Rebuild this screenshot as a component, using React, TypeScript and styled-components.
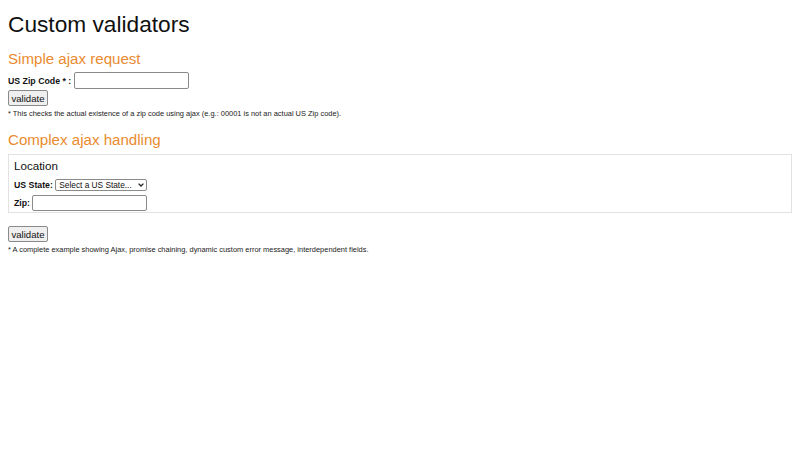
import React from "react";
import styled, { createGlobalStyle } from "styled-components";

const GlobalStyle = createGlobalStyle`
  html, body { background: #fff; }
  body {
    margin: 8px;
    font-family: "Liberation Sans", Arial, sans-serif;
    color: #111;
  }
`;

const Title = styled.h1`
  margin: 3px 0 13px;
  font-size: 22.7px;
  line-height: 26px;
  font-weight: normal;
  color: #111;
`;

const SectionTitle = styled.h2<{ $top?: number }>`
  margin: ${(p) => p.$top ?? 0}px 0 0;
  font-size: 15.1px;
  line-height: 18px;
  font-weight: normal;
  color: #e98b30;
`;

const Row = styled.div<{ $top?: number }>`
  display: flex;
  align-items: center;
  gap: 2.4px;
  margin-top: ${(p) => p.$top ?? 0}px;
`;

const Label = styled.label`
  font-size: 8.75px;
  font-weight: bold;
  color: #111;
  white-space: pre;
`;

const TextInput = styled.input<{ $w: number; $h: number }>`
  box-sizing: border-box;
  width: ${(p) => p.$w}px;
  height: ${(p) => p.$h}px;
  margin: 0;
  padding: 1px 2px;
  border: 1px solid #8a8a8a;
  border-radius: 2px;
  background: #fff;
  font: 9px "Liberation Sans", Arial, sans-serif;
`;

const SelectWrap = styled.span`
  position: relative;
  display: inline-flex;
`;

const Select = styled.select`
  box-sizing: border-box;
  width: 92px;
  height: 12px;
  margin: 0;
  padding: 0 0 0 3px;
  appearance: none;
  -webkit-appearance: none;
  border: 1px solid #8a8a8a;
  border-radius: 2px;
  background: #fff;
  color: #111;
  font: 8.3px "Liberation Sans", Arial, sans-serif;
  line-height: 10px;
`;

const Chevron = styled.svg`
  position: absolute;
  right: 3px;
  top: 3.5px;
  width: 6px;
  height: 4px;
  pointer-events: none;
`;

const Button = styled.button<{ $top: number }>`
  display: block;
  box-sizing: border-box;
  width: 40px;
  height: 16px;
  margin: ${(p) => p.$top}px 0 0;
  padding: 0;
  border: 1px solid #8a8a8a;
  border-radius: 2px;
  background: #efefef;
  color: #111;
  font: 9.6px "Liberation Sans", Arial, sans-serif;
`;

const Note = styled.p<{ $top: number }>`
  margin: ${(p) => p.$top}px 0 0;
  font-size: 7.45px;
  line-height: 9px;
  color: #222;
`;

const Fieldset = styled.div`
  margin-top: 5px;
  border: 1px solid #e2e2e2;
  padding: 4px 5px 1px;
`;

const Legend = styled.div`
  font-size: 11.6px;
  line-height: 14px;
  color: #111;
  margin-bottom: 6px;
`;

export default function App() {
  return (
    <>
      <GlobalStyle />
      <Title>Custom validators</Title>

      <SectionTitle>Simple ajax request</SectionTitle>
      <Row $top={4}>
        <Label>US Zip Code * :</Label>
        <TextInput $w={115} $h={17} />
      </Row>
      <Button $top={1}>validate</Button>
      <Note $top={3}>
        * This checks the actual existence of a zip code using ajax (e.g.: 00001 is not an actual US Zip code).
      </Note>

      <SectionTitle $top={13}>Complex ajax handling</SectionTitle>
      <Fieldset>
        <Legend>Location</Legend>
        <Row>
          <Label>US State:</Label>
          <SelectWrap>
            <Select defaultValue="">
              <option value="">Select a US State...</option>
            </Select>
            <Chevron viewBox="0 0 6 4">
              <path d="M0.6 0.6 L3 3 L5.4 0.6" fill="none" stroke="#222" strokeWidth="1.3" />
            </Chevron>
          </SelectWrap>
        </Row>
        <Row $top={4}>
          <Label>Zip:</Label>
          <TextInput $w={115} $h={16} />
        </Row>
      </Fieldset>
      <Button $top={13}>validate</Button>
      <Note $top={3}>
        * A complete example showing Ajax, promise chaining, dynamic custom error message, interdependent fields.
      </Note>
    </>
  );
}
